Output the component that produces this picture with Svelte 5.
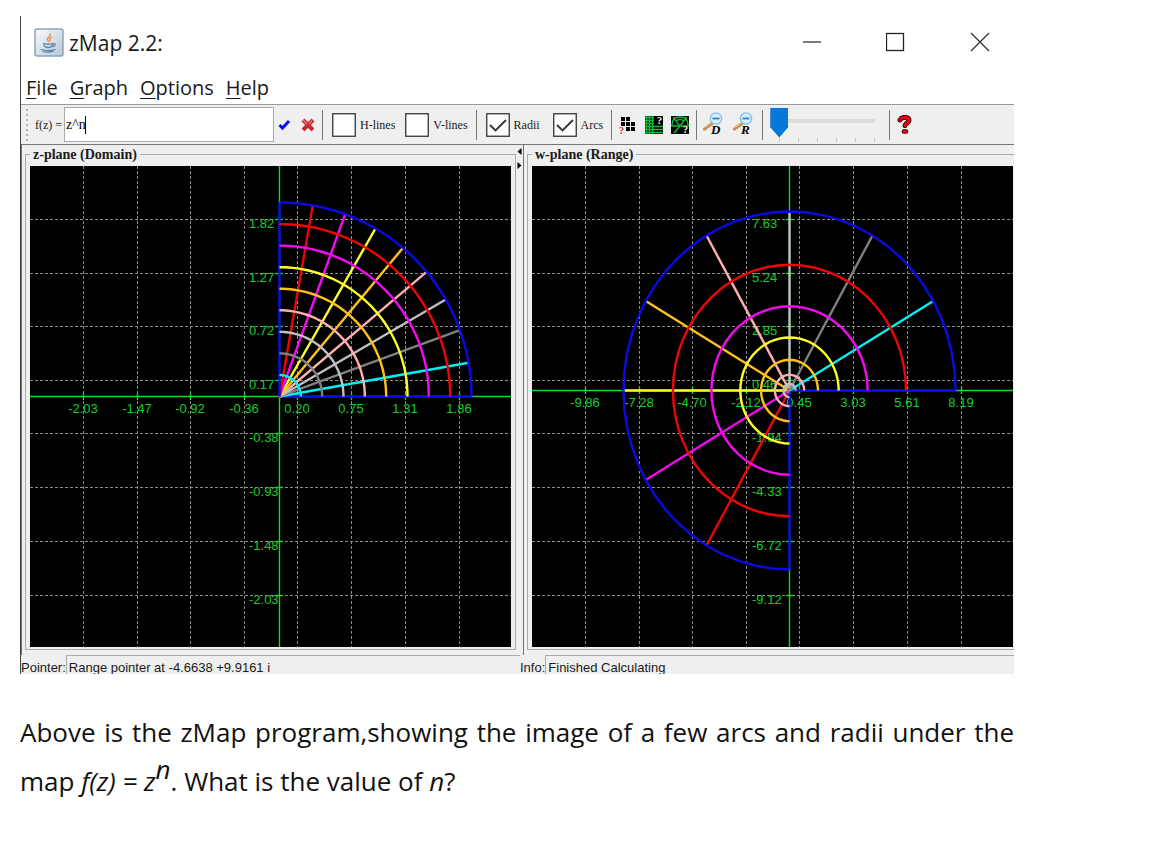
<script lang="ts">
  interface Plane {
    title: string;
    originX: number;
    originY: number;
    rx: number;
    ry: number;
    power: number;
    labelX: number;
    xLabels: string[];
    yLabels: string[];
  }

  const SIZE = 481;
  const grid = [53, 107, 160, 214, 267, 321, 375, 429];
  const colors = [
    '#00f0f5',
    '#808080',
    '#c0c0c0',
    '#ffafaf',
    '#ffc21c',
    '#ffff28',
    '#f50af0',
    '#f00505',
    '#0a0ae6',
  ];

  const planes: Plane[] = [
    {
      title: 'z-plane (Domain)',
      originX: 249,
      originY: 230,
      rx: 192,
      ry: 194,
      power: 1,
      labelX: 219,
      xLabels: ['-2.03', '-1.47', '-0.92', '-0.36', '0.20', '0.75', '1.31', '1.86'],
      yLabels: ['1.82', '1.27', '0.72', '0.17', '-0.38', '-0.93', '-1.48', '-2.03'],
    },
    {
      title: 'w-plane (Range)',
      originX: 257,
      originY: 224,
      rx: 166,
      ry: 179,
      power: 3,
      labelX: 220,
      xLabels: ['-9.86', '-7.28', '-4.70', '-2.12', '0.45', '3.03', '5.61', '8.19'],
      yLabels: ['7.63', '5.24', '2.85', '0.46', '-1.94', '-4.33', '-6.72', '-9.12'],
    },
  ];

  let formula = $state('z^n');
  let hLines = $state(false);
  let vLines = $state(false);
  let radii = $state(true);
  let arcs = $state(true);
  let speed = $state(0);

  function point(p: Plane, r: number, deg: number) {
    const scale = Math.pow(r, p.power);
    const a = (deg * p.power * Math.PI) / 180;
    const x = p.originX + 0.5 + p.rx * scale * Math.cos(a);
    const y = p.originY + 0.5 - p.ry * scale * Math.sin(a);
    return `${x.toFixed(1)},${y.toFixed(1)}`;
  }

  // image of the quarter circle of radius r
  function arc(p: Plane, r: number) {
    const pts = [];
    for (let d = 0; d <= 90; d += 2) pts.push(point(p, r, d));
    return pts.join(' ');
  }
</script>

{#snippet plot(p: Plane)}
  <svg class="plot" viewBox="0 0 {SIZE} {SIZE}" role="img" aria-label={p.title}>
    <rect width={SIZE} height={SIZE} fill="#000" />
    <g stroke="#8c8c8c" stroke-dasharray="3 2" shape-rendering="crispEdges">
      {#each grid as g}
        <line x1={g + 0.5} y1="0" x2={g + 0.5} y2={SIZE} />
        <line x1="0" y1={g + 0.5} x2={SIZE} y2={g + 0.5} />
      {/each}
    </g>
    <g stroke="#14d828" stroke-width="1.4">
      <line x1={p.originX + 0.5} y1="0" x2={p.originX + 0.5} y2={SIZE} />
      <line x1="0" y1={p.originY + 0.5} x2={SIZE} y2={p.originY + 0.5} />
      {#each grid as g}
        <line x1={g + 0.5} y1={p.originY - 3} x2={g + 0.5} y2={p.originY + 4} />
        <line x1={p.originX - 3} y1={g + 0.5} x2={p.originX + 4} y2={g + 0.5} />
      {/each}
    </g>
    <g class="ticks">
      {#each grid as g, i}
        <text x={g} y={p.originY + 17} text-anchor="middle">{p.xLabels[i]}</text>
        <text x={p.labelX} y={g + 9}>{p.yLabels[i]}</text>
      {/each}
    </g>
    <g fill="none" stroke-width="2.4">
      {#if radii}
        <polyline points="{point(p, 0, 0)} {point(p, 1, 0)}" stroke={colors[8]} />
        {#each colors as color, i}
          <polyline points="{point(p, 0, 0)} {point(p, 1, (i + 1) * 10)}" stroke={color} />
        {/each}
      {/if}
      {#if arcs}
        {#each colors as color, i}
          <polyline points={arc(p, (i + 1) / 9)} stroke={color} />
        {/each}
      {/if}
    </g>
  </svg>
{/snippet}

{#snippet box(mark: boolean)}
  <svg class="tick-mark" viewBox="0 0 24 24" aria-hidden="true">
    <rect x="0.75" y="0.75" width="22.5" height="22.5" fill="#fff" stroke="#333" stroke-width="1.3" />
    {#if mark}
      <path d="M4 12l5.500 5.500L20 7" fill="none" stroke="#333" stroke-width="1.8" />
    {/if}
  </svg>
{/snippet}

{#snippet lens(letter: string)}
  <svg width="22" height="26" viewBox="0 0 22 26" aria-hidden="true">
    <path d="M1.500 17L9 11.500" stroke="#c98a55" stroke-width="3.200" stroke-linecap="round" />
    <path d="M2 15.700L8.500 11" stroke="#f0c090" stroke-width="1" />
    <circle cx="13" cy="6.500" r="5.700" fill="#d6efff" stroke="#86bfe8" stroke-width="1.300" />
    <path d="M9.500 6.500h7" stroke="#2b7fd0" stroke-width="1.800" />
    <text x="8" y="22" class="lens-letter">{letter}</text>
  </svg>
{/snippet}

<main>
  <section class="window">
    <header class="titlebar">
      <svg class="logo" viewBox="0 0 30 29" aria-hidden="true">
        <defs>
          <linearGradient id="tile" x1="0" y1="0" x2="1" y2="1">
            <stop offset="0" stop-color="#fafcfe" />
            <stop offset="1" stop-color="#b4c6d8" />
          </linearGradient>
        </defs>
        <rect x="1" y="1" width="28" height="27" rx="2" fill="url(#tile)" stroke="#8fa5ba" stroke-width="1.5" />
        <g fill="none" stroke-linecap="round">
          <path d="M16 6c2 2.500-4 3.500-2.500 6 .5 1 1 1 1 1.500M17.500 9.500c-2 1-2.500 2-1.500 3.500" stroke="#e8954c" stroke-width="1.400" />
          <path d="M9.500 15.500c3 1 6 1 9 0M10 16c0 3 1 3.500 4 3.500s4.500-.5 4.500-3.500M19 16c3-1 3 2-.5 2.500" stroke="#66809a" stroke-width="1.300" />
          <path d="M7 21.500c4 1.500 11 1.500 14 0M9 23.500c4 .8 7 .8 10-.3" stroke="#5a86b4" stroke-width="1.200" />
        </g>
      </svg>
      <h1>zMap 2.2:</h1>
      <div class="controls">
        <button aria-label="Minimize">
          <svg width="20" height="20" viewBox="0 0 20 20"><path d="M1 10h18" stroke="#333" stroke-width="1.300" /></svg>
        </button>
        <button aria-label="Maximize">
          <svg width="20" height="20" viewBox="0 0 20 20"><rect x="0.500" y="1.500" width="17" height="17" fill="none" stroke="#222" stroke-width="1.300" /></svg>
        </button>
        <button aria-label="Close">
          <svg width="20" height="20" viewBox="0 0 20 20"><path d="M1 1l18 18M19 1L1 19" stroke="#333" stroke-width="1.300" /></svg>
        </button>
      </div>
    </header>

    <nav class="menu">
      <button><u>F</u>ile</button>
      <button><u>G</u>raph</button>
      <button><u>O</u>ptions</button>
      <button><u>H</u>elp</button>
    </nav>

    <div class="toolbar">
      <div class="formula">
        <span class="grip"></span>
        <label for="formula">f(z) =</label>
        <div class="entry">
          <input id="formula" type="text" bind:value={formula} />
          <span class="caret"></span>
        </div>
        <button aria-label="Apply">
          <svg width="13" height="12" viewBox="0 0 13 12"><path d="M1.500 6l3 3L11 2" fill="none" stroke="#0010f0" stroke-width="3" /></svg>
        </button>
        <button aria-label="Clear">
          <svg width="14" height="14" viewBox="0 0 14 14">
            <path d="M2 2l10 10M12 2L2 12" stroke="#c42a34" stroke-width="4" />
            <path d="M2 2l4 4M11 2.500L8 6" stroke="#ee7078" stroke-width="1.500" />
          </svg>
        </button>
      </div>

      <div class="group checks">
        <label><input type="checkbox" bind:checked={hLines} />{@render box(hLines)}H-lines</label>
        <label><input type="checkbox" bind:checked={vLines} />{@render box(vLines)}V-lines</label>
      </div>

      <div class="group checks wide">
        <label><input type="checkbox" bind:checked={radii} />{@render box(radii)}Radii</label>
        <label><input type="checkbox" bind:checked={arcs} />{@render box(arcs)}Arcs</label>
      </div>

      <div class="group icons">
        <button aria-label="Number of points">
          <svg width="18" height="20" viewBox="0 0 18 20">
            <path d="M2 2h4v4H2zM7 2h4v4H7zM2 7h4v4H2zM7 7h4v4H7zM12 7h4v4h-4zM7 12h4v4H7zM12 12h4v4h-4z" />
            <path d="M0 11h6v9H0z" fill="#efefef" />
            <text x="0" y="19" class="mark red">?</text>
          </svg>
        </button>
        <button aria-label="Grid settings">
          <svg width="18" height="18" viewBox="0 0 18 18">
            <rect width="18" height="18" />
            <path d="M1.500 0v18M4.500 0v18M7.500 0v18M0 10.500h18M0 13.500h18M0 16.500h18M0 1.500h9M0 4.500h9M0 7.500h9" stroke="#0fbd35" stroke-width="1.400" />
            <text x="12" y="8" class="mark white">?</text>
          </svg>
        </button>
        <button aria-label="Polar settings">
          <svg width="18" height="18" viewBox="0 0 18 18">
            <rect width="18" height="18" />
            <path d="M9 10L2 1M9 10L16 1M0 10h18M9 10L3 17M5 5q4-3 8 0M1 9q0-8 8-8 8 0 8 8" fill="none" stroke="#0fbd35" stroke-width="1.400" />
            <text x="12" y="17" class="mark white">?</text>
          </svg>
        </button>
      </div>

      <div class="group icons zooms">
        <button aria-label="Zoom out domain">{@render lens('D')}</button>
        <button aria-label="Zoom out range">{@render lens('R')}</button>
      </div>

      <div class="group speed">
        <input type="range" min="0" max="5" bind:value={speed} aria-label="Speed" />
        <div class="marks">
          {#each Array(6) as _}<i></i>{/each}
        </div>
      </div>

      <div class="group icons">
        <button aria-label="Help">
          <svg width="16" height="20" viewBox="0 0 16 20">
            <g fill="none" stroke-linecap="round" stroke-linejoin="round">
              <path d="M3 5c2-4 9-3 9 .5 0 2.500-4 3-4 5" stroke="#200" stroke-width="5" />
              <path d="M7 16.500h2" stroke="#200" stroke-width="4.600" />
              <path d="M3 5c2-4 9-3 9 .5 0 2.500-4 3-4 5" stroke="#e80010" stroke-width="3.400" />
              <path d="M7 16.500h2" stroke="#e80010" stroke-width="3" />
            </g>
          </svg>
        </button>
      </div>
    </div>

    <div class="planes">
      <div class="pane left">
        <fieldset>
          <legend>{planes[0].title}</legend>
          {@render plot(planes[0])}
        </fieldset>
      </div>
      <div class="divider">
        <svg width="6" height="24" viewBox="0 0 6 24" aria-hidden="true">
          <path d="M5.500 3v7L1.500 6.500zM1.500 17v7l4-3.500z" />
        </svg>
      </div>
      <div class="pane right">
        <fieldset>
          <legend>{planes[1].title}</legend>
          {@render plot(planes[1])}
        </fieldset>
      </div>
    </div>

    <footer class="status">
      <div class="cell"><span>Pointer:</span><output>Range pointer at -4.6638 +9.9161 i</output></div>
      <div class="cell"><span>Info:</span><output>Finished Calculating</output></div>
    </footer>
  </section>

  <p class="question">
    Above is the zMap program,showing the image of a few arcs and radii under the map
    <em>f(z) = z<sup>n</sup></em>. What is the value of <em>n</em>?
  </p>
</main>

<style>
  :global(body) {
    margin: 0;
    background: #fff;
  }
  main {
    box-sizing: border-box;
    max-width: 1034px;
    padding: 16px 20px;
  }
  button {
    padding: 0;
    border: 0;
    background: none;
    color: inherit;
    font: inherit;
    line-height: 0;
  }
  .window {
    overflow: hidden;
    border-left: 1px solid #444;
    background: #fff;
    color: #1a1a1a;
  }
  .titlebar {
    display: flex;
    align-items: center;
    height: 52px;
    padding: 0 24px 0 13px;
    font-family: 'Open Sans', sans-serif;
  }
  .logo {
    width: 30px;
    height: 29px;
    margin-right: 5px;
  }
  h1 {
    margin: 2px 0 0;
    font-size: 21px;
    font-weight: 400;
  }
  .controls {
    display: flex;
    gap: 64px;
    margin-left: auto;
  }
  .menu {
    display: flex;
    gap: 12px;
    height: 36px;
    padding-left: 5px;
    font: 20px 'Open Sans', sans-serif;
  }
  .menu button {
    line-height: 40px;
  }
  .menu u {
    text-underline-offset: 3px;
    text-decoration-thickness: 1px;
  }
  .toolbar {
    display: flex;
    align-items: center;
    height: 39px;
    border-top: 1px solid #999;
    border-bottom: 1px solid #777;
    background: #efefef;
    font: 12px/16px 'Liberation Serif', serif;
  }
  .formula {
    display: flex;
    align-items: center;
    width: 301px;
  }
  .grip {
    width: 2px;
    height: 32px;
    margin: 0 7px 0 5px;
    background: repeating-linear-gradient(#b4b4b4 0 2px, transparent 2px 5px);
  }
  .formula label {
    width: 29px;
    white-space: nowrap;
  }
  .entry {
    position: relative;
    width: 210px;
    margin-right: 4px;
  }
  .entry input {
    box-sizing: border-box;
    display: block;
    width: 100%;
    height: 35px;
    padding: 1px 1px 0;
    border: 1px solid #aaa;
    border-radius: 0;
    outline: none;
    background: #fff;
    font: 14px 'Liberation Serif', serif;
  }
  .caret {
    position: absolute;
    top: 9px;
    left: 21px;
    width: 1px;
    height: 18px;
    background: #000;
  }
  .formula button + button {
    margin-left: 10px;
  }
  .group {
    position: relative;
    display: flex;
    align-items: center;
    height: 30px;
    border-left: 1px solid #777;
  }
  .checks {
    gap: 10px;
    padding: 0 8px 0 9px;
  }
  .wide {
    gap: 13px;
  }
  .checks label {
    display: flex;
    align-items: center;
    white-space: nowrap;
  }
  .checks input {
    position: absolute;
    opacity: 0;
  }
  .tick-mark {
    width: 24px;
    height: 24px;
    margin-right: 4px;
  }
  .icons {
    gap: 8px;
    padding: 0 7px;
  }
  .mark {
    font: bold 10px 'Liberation Serif', serif;
  }
  .red {
    fill: #d02030;
  }
  .white {
    fill: #fff;
  }
  .zooms {
    padding: 0 7px 0 6px;
  }
  .lens-letter {
    font: italic bold 13px 'Liberation Serif', serif;
  }
  .speed {
    flex-direction: column;
    align-items: stretch;
    width: 105px;
    padding: 0 14px 0 7px;
  }
  .speed input {
    appearance: none;
    flex: none;
    width: 100%;
    height: 30px;
    margin: -2px 0 0;
    background: linear-gradient(#dcdcdc, #dcdcdc) 0 11px / 100% 4px no-repeat;
  }
  .speed input::-webkit-slider-thumb {
    appearance: none;
    width: 18px;
    height: 30px;
    border: 0;
    border-radius: 0;
    background: #0878d8;
    clip-path: polygon(0 0, 100% 0, 100% 66%, 50% 100%, 0 66%);
  }
  .marks {
    display: flex;
    justify-content: space-between;
    padding-left: 9px;
  }
  .marks i {
    width: 1px;
    height: 4px;
    background: #c4c4c4;
  }
  .planes {
    display: flex;
    background: #efefef;
  }
  .pane {
    min-width: 0;
    padding: 2px 0 5px 3px;
    border-left: 1px solid #707070;
  }
  .left {
    flex: 495 1 0;
  }
  .right {
    flex: 491 1 0;
  }
  fieldset {
    min-width: 0;
    margin: 0;
    padding: 4px 4px 2px;
    border: 1px solid #aaa;
  }
  .right fieldset {
    border-right: 0;
    padding-right: 1px;
  }
  legend {
    padding: 0 3px;
    font: bold 14px/15px 'Liberation Serif', serif;
  }
  .plot {
    display: block;
    width: 100%;
    height: auto;
  }
  .ticks {
    fill: #14cf28;
    font: 13px 'Liberation Sans', sans-serif;
  }
  .divider {
    width: 7px;
  }
  .status {
    display: flex;
    height: 19px;
    overflow: hidden;
    background: #efefef;
    font: 13px/26px 'Liberation Sans', sans-serif;
  }
  .cell {
    display: flex;
    flex: 499 1 0;
  }
  .cell + .cell {
    flex-grow: 494;
  }
  output {
    flex: 1;
    padding-left: 2px;
    border-left: 1px solid #aaa;
    box-shadow: inset 0 1px #aaa;
  }
  .question {
    margin: 34px 0 0;
    color: #111;
    font: 26px/49px 'Open Sans', sans-serif;
    text-align: justify;
  }
  sup {
    font-size: 26px;
    line-height: 0;
    vertical-align: 12px;
  }
</style>
